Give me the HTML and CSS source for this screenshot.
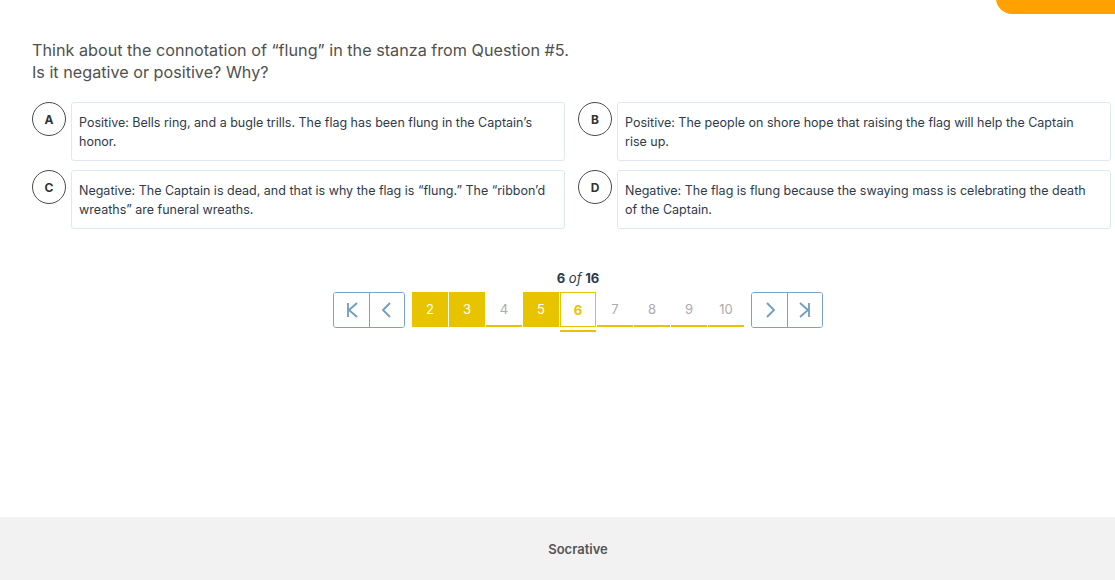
FILE: index.html
```html
<!DOCTYPE html>
<html lang="en">
<head>
  <meta charset="UTF-8">
  <meta name="viewport" content="width=device-width, initial-scale=1.0">
  <title>Socrative Quiz</title>
  <link rel="stylesheet" href="styles.css">
</head>
<body>
  <div class="page">
    <button class="tab-button" aria-label="Menu"></button>
    <main class="content">
      <h1 class="question">Think about the connotation of “flung” in the stanza from Question #5.<br>Is it negative or positive? Why?</h1>

      <div class="answers">
        <div class="answer">
          <span class="letter">A</span>
          <div class="answer-text">Positive: Bells ring, and a bugle trills. The flag has been flung in the Captain’s honor.</div>
        </div>
        <div class="answer">
          <span class="letter">B</span>
          <div class="answer-text">Positive: The people on shore hope that raising the flag will help the Captain rise up.</div>
        </div>
        <div class="answer">
          <span class="letter">C</span>
          <div class="answer-text">Negative: The Captain is dead, and that is why the flag is “flung.” The “ribbon’d wreaths” are funeral wreaths.</div>
        </div>
        <div class="answer">
          <span class="letter">D</span>
          <div class="answer-text">Negative: The flag is flung because the swaying mass is celebrating the death of the Captain.</div>
        </div>
      </div>

      <div class="counter"><b>6</b> <i>of</i> <b>16</b></div>

      <nav class="pager">
        <div class="nav-group">
          <button class="nav-btn" aria-label="First">
            <svg viewBox="0 0 20 20"><line x1="6" y1="3" x2="6" y2="17"/><polyline points="15,3 7,10 15,17"/></svg>
          </button>
          <button class="nav-btn" aria-label="Previous">
            <svg viewBox="0 0 20 20"><polyline points="13,3 6,10 13,17"/></svg>
          </button>
        </div>
        <div class="pages">
          <span class="page-num answered">2</span>
          <span class="page-num answered">3</span>
          <span class="page-num">4</span>
          <span class="page-num answered">5</span>
          <span class="page-num current">6</span>
          <span class="page-num">7</span>
          <span class="page-num">8</span>
          <span class="page-num">9</span>
          <span class="page-num">10</span>
        </div>
        <div class="nav-group">
          <button class="nav-btn" aria-label="Next">
            <svg viewBox="0 0 20 20"><polyline points="7,3 14,10 7,17"/></svg>
          </button>
          <button class="nav-btn" aria-label="Last">
            <svg viewBox="0 0 20 20"><polyline points="5,3 13,10 5,17"/><line x1="14" y1="3" x2="14" y2="17"/></svg>
          </button>
        </div>
      </nav>
    </main>
    <footer class="footer">Socrative</footer>
  </div>
</body>
</html>
```

FILE: styles.css
```css
/* Base */
* {
  margin: 0;
  padding: 0;
  box-sizing: border-box;
}

html,
body {
  overflow: hidden;
}

body {
  font-family: Inter, "Noto Sans", sans-serif;
  background-color: #ffffff;
  color: #2e3a4b;
}

.page {
  position: relative;
  width: 1156px;
}

/* Orange tab in the corner */
.tab-button {
  position: absolute;
  top: -20px;
  left: 996px;
  width: 160px;
  height: 34px;
  border: none;
  border-radius: 16px;
  background-color: #ffa100;
}

/* Question */
.content {
  min-height: 517px;
  padding-top: 39px;
}

.question {
  padding-left: 32px;
  font-size: 16.2px;
  font-weight: 400;
  line-height: 22px;
  color: #505050;
}

/* Answers */
.answers {
  display: grid;
  grid-template-columns: 1fr 1fr;
  column-gap: 13px;
  row-gap: 9px;
  margin-top: 19px;
  padding: 0 45px 0 32px;
}

.answer {
  display: flex;
  align-items: flex-start;
  gap: 5px;
}

.letter {
  flex: none;
  width: 34px;
  height: 34px;
  display: flex;
  align-items: center;
  justify-content: center;
  border: 1px solid #4a4a4a;
  border-radius: 50%;
  font-size: 12px;
  font-weight: 700;
  color: #333333;
}

.answer-text {
  flex: 1;
  min-height: 58px;
  padding: 10px 12px 9px 7px;
  border: 1px solid #dde8f1;
  border-radius: 3px;
  font-size: 12.5px;
  line-height: 19px;
  color: #2e3a4b;
}

/* Counter */
.counter {
  margin-top: 41px;
  text-align: center;
  font-size: 13px;
  line-height: 16px;
  color: #2c3a4a;
}

.counter b {
  font-weight: 700;
}

/* Pager */
.pager {
  display: flex;
  justify-content: center;
  align-items: flex-start;
  gap: 7px;
  margin-top: 6px;
}

.nav-group {
  display: flex;
  border: 1px solid #76a3c9;
  border-radius: 3px;
  overflow: hidden;
}

.nav-btn {
  width: 35px;
  height: 34px;
  display: flex;
  align-items: center;
  justify-content: center;
  border: none;
  background-color: #ffffff;
}

.nav-btn + .nav-btn {
  border-left: 1px solid #76a3c9;
}

.nav-btn svg {
  width: 20px;
  height: 20px;
  fill: none;
  stroke: #6e9cc4;
  stroke-width: 1.8;
}

.pages {
  display: flex;
  gap: 1px;
}

.page-num {
  position: relative;
  width: 36px;
  height: 35px;
  display: flex;
  align-items: center;
  justify-content: center;
  font-size: 13px;
  color: #ababab;
  border-bottom: 2px solid #e8c400;
}

.page-num.answered {
  background-color: #e8c400;
  color: #ffffff;
}

.page-num.current {
  border: 1px solid #e8c400;
  color: #e8c400;
  font-weight: 700;
}

.page-num.current::after {
  content: "";
  position: absolute;
  left: -1px;
  right: -1px;
  bottom: -6px;
  height: 2px;
  background-color: #e8c400;
}

/* Footer */
.footer {
  height: 70px;
  padding-top: 24px;
  background-color: #f2f2f2;
  text-align: center;
  font-size: 13px;
  font-weight: 600;
  color: #555555;
}
```
